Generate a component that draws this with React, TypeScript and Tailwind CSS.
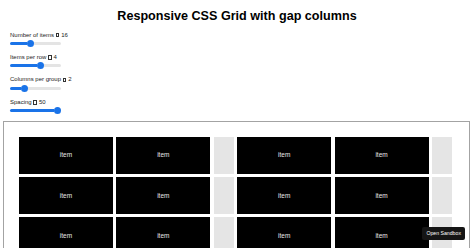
import React from 'react';

const controls = [
  { label: 'Number of items', value: 16, pct: 39 },
  { label: 'Items per row', value: 4, pct: 62 },
  { label: 'Columns per group', value: 2, pct: 24 },
  { label: 'Spacing', value: 50, pct: 100 },
];

const rows = [0, 1, 2, 3];

// thumb travels 44px inside a 51px track
function Slider({ pct }: { pct: number }) {
  const filled = (pct * 44) / 100;
  return (
    <div className="flex h-[7px] w-[51px] items-center">
      <div className="h-[3px] shrink-0 rounded-l-full bg-[#1a73e8]" style={{ width: `${filled}px` }} />
      <div className="h-[7px] w-[7px] shrink-0 rounded-full bg-[#1a73e8]" />
      <div className="h-[3px] flex-1 rounded-r-full bg-[#e4e4e4]" />
    </div>
  );
}

function Item() {
  return (
    <div className="flex h-[37px] items-center justify-center bg-black text-[6.5px] text-[#e8e8e8]">item</div>
  );
}

function Gap() {
  return <div className="h-[37px] bg-[#e5e5e5]" />;
}

export default function App() {
  return (
    <div className="relative h-[248px] overflow-hidden bg-white font-['Liberation_Sans',Arial,sans-serif] text-black">
      {/* Title */}
      <h1 className="pt-[9px] text-center text-[12.6px] font-bold leading-[15px]">
        Responsive CSS Grid with gap columns
      </h1>

      {/* Controls */}
      <div className="flex flex-col gap-[7.2px] pl-[10px] pt-[7.5px]">
        {controls.map((c) => (
          <div key={c.label} className="flex flex-col gap-[1.3px]">
            <div className="flex h-[7px] items-center gap-[1.8px] text-[6px] leading-[7px] text-[#222]">
              <span>{c.label}</span>
              <span className="inline-block h-[4.8px] w-[3.6px] border-[0.6px] border-[#333]" />
              <span>{c.value}</span>
            </div>
            <Slider pct={c.pct} />
          </div>
        ))}
      </div>

      {/* Grid box */}
      <div className="ml-[3px] mr-[4px] mt-[6.5px] border border-[#a3a3a3] pb-[15px] pl-[15px] pr-[17px] pt-[15px]">
        <div className="grid grid-cols-[1fr_1fr_20px_1fr_1fr_20px] gap-x-[3.5px] gap-y-[3.3px]">
          {rows.map((r) => (
            <React.Fragment key={r}>
              <Item />
              <Item />
              <Gap />
              <Item />
              <Item />
              <Gap />
            </React.Fragment>
          ))}
        </div>
      </div>

      {/* Open Sandbox button */}
      <div className="absolute bottom-[8px] right-[9px] flex h-[13px] items-center rounded-[2px] bg-[#151515] px-[4px] text-[5.2px] text-white">
        Open Sandbox
      </div>
    </div>
  );
}
